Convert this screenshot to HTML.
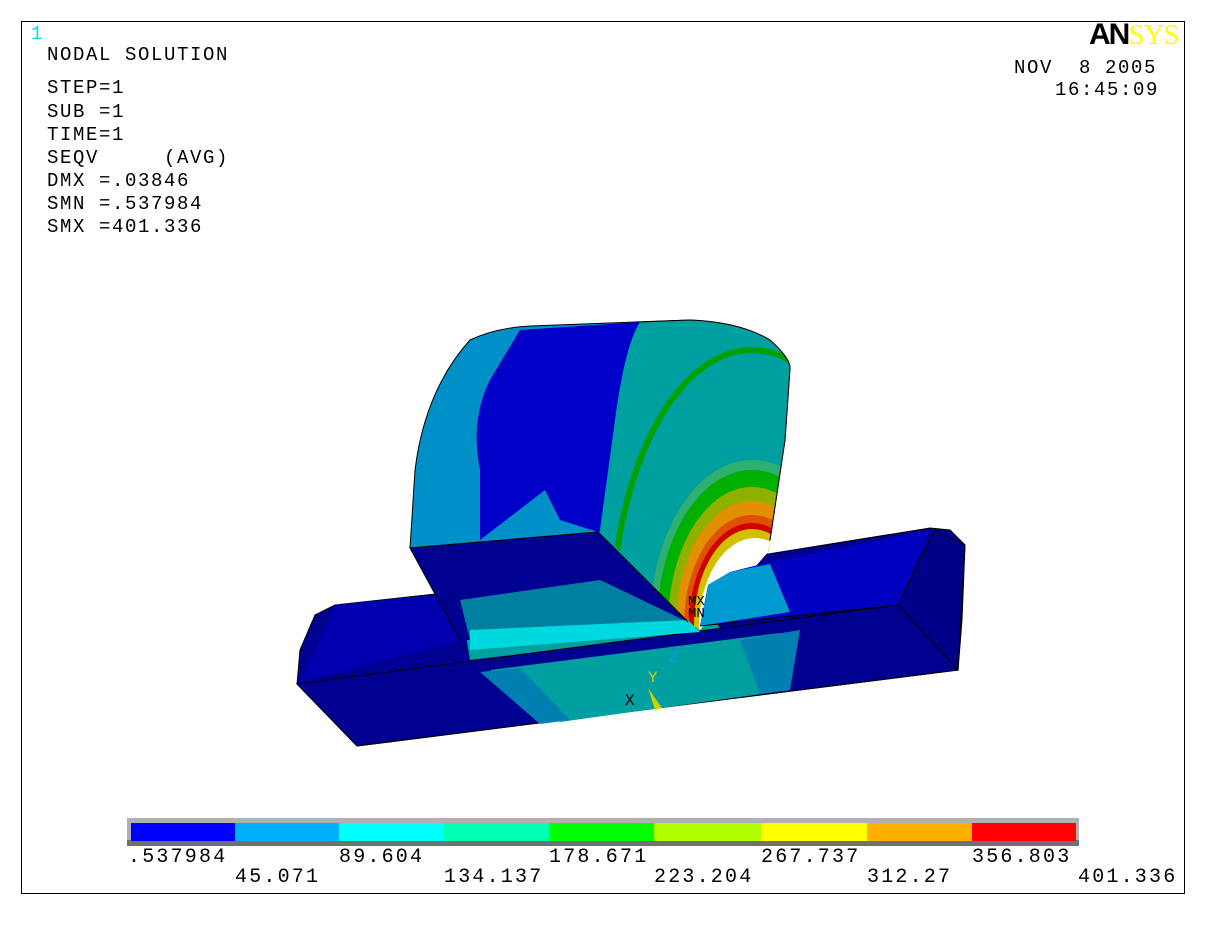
<!DOCTYPE html>
<html><head><meta charset="utf-8"><style>
body{margin:0;background:#fff;width:1221px;height:950px;overflow:hidden;position:relative;font-family:"Liberation Mono",monospace;}
.frame{position:absolute;left:21px;top:21px;width:1162px;height:871px;border:1px solid #000;}
.t{position:absolute;font-size:19px;letter-spacing:1.6px;color:#000;white-space:pre;line-height:20px;}
.l{position:absolute;font-size:20px;letter-spacing:2.2px;white-space:pre;line-height:20px;color:#000;}
</style></head><body>
<div class="frame"></div>
<div class="t" style="left:31px;top:24px;color:#00e0e0;">1</div>
<div class="t" style="left:47px;top:45px;">NODAL SOLUTION</div>
<div class="t" style="left:47px;top:78px;">STEP=1</div>
<div class="t" style="left:47px;top:102px;">SUB =1</div>
<div class="t" style="left:47px;top:125px;">TIME=1</div>
<div class="t" style="left:47px;top:148px;">SEQV     (AVG)</div>
<div class="t" style="left:47px;top:171px;">DMX =.03846</div>
<div class="t" style="left:47px;top:194px;">SMN =.537984</div>
<div class="t" style="left:47px;top:217px;">SMX =401.336</div>
<div class="t" style="left:1014px;top:58px;">NOV  8 2005</div>
<div class="t" style="left:1055px;top:80px;">16:45:09</div>
<div style="position:absolute;left:1089px;top:20px;font-family:'Liberation Sans',sans-serif;font-weight:bold;font-size:30px;line-height:30px;letter-spacing:-2px;">AN<span style="font-family:'Liberation Serif',serif;font-weight:normal;color:#ffff00;letter-spacing:-1px;font-size:29px;">SYS</span></div>

<svg style="position:absolute;left:0;top:0" width="1221" height="950">
<defs>
<clipPath id="rf"><path d="M640,322 L690,320 Q740,322 770,340 Q790,358 790,368 L785,440 L768,552 L700,630 L688,622 L600,530 L615,420 Q625,345 640,322 Z"/></clipPath>
</defs>
<!-- bar -->
<polygon points="297,684 300,650 315,615 335,605 700,565 930,528 950,530 965,545 962,620 958,670 357,746" fill="#000090" stroke="#000" stroke-width="1"/>
<polygon points="335,605 460,592 465,640 300,682" fill="#0000b0"/>
<polygon points="460,600 700,575 720,630 470,660" fill="#00a0a0"/>
<polygon points="297,684 898,605 958,670 357,746" fill="#000090" stroke="#000" stroke-width="1"/>
<polygon points="490,670 780,633 790,690 560,722" fill="#00a0a0"/>
<polygon points="480,672 520,668 570,720 540,724" fill="#0080b0"/>
<polygon points="740,640 800,630 790,690 760,694" fill="#0080b0"/>
<polygon points="898,605 935,530 965,545 958,670" fill="#000088" stroke="#000" stroke-width="1"/>
<!-- wheel -->
<path d="M410,548 L415,470 Q425,390 470,340 Q495,328 530,326 L690,320 Q740,322 770,340 Q790,358 790,368 L785,440 L770,540 L700,550 L598,532 Z" fill="#0090c8" stroke="#000" stroke-width="1"/>
<path d="M520,330 L640,322 L620,520 L598,532 L560,520 L545,490 L480,540 L480,470 Q470,420 490,380 Z" fill="#0000c8"/>
<polygon points="598,532 640,530 700,600 688,622" fill="#00a0a0"/>
<g clip-path="url(#rf)">
<rect x="590" y="300" width="210" height="340" fill="#00a0a0"/>
<ellipse cx="752" cy="625" rx="140" ry="275" fill="none" stroke="#00a000" stroke-width="6"/>
<ellipse cx="752" cy="625" rx="102" ry="165" fill="#30b070"/>
<ellipse cx="752" cy="625" rx="95" ry="155" fill="#00b000"/>
<ellipse cx="752" cy="625" rx="84" ry="138" fill="#90b000"/>
<ellipse cx="752" cy="625" rx="76" ry="124" fill="#e09000"/>
<ellipse cx="752" cy="625" rx="68" ry="110" fill="#e05000"/>
<ellipse cx="752" cy="625" rx="63" ry="102" fill="#d00000"/>
<ellipse cx="752" cy="625" rx="58" ry="96" fill="#d0c000"/>
<ellipse cx="755" cy="628" rx="56" ry="90" fill="#fff"/>
</g>
<path d="M640,322 L690,320 Q740,322 770,340 Q790,358 790,368 L785,440 L770,540" fill="none" stroke="#000"/>
<!-- wheel bottom box -->
<polygon points="410,548 598,532 688,622 460,640" fill="#000090" stroke="#000" stroke-width="1"/>
<polygon points="460,600 600,580 688,622 470,640" fill="#0080a0"/>
<polygon points="470,630 688,620 700,632 470,650" fill="#00d8e0"/>
<line x1="598" y1="532" x2="688" y2="622" stroke="#000"/>
<!-- bar right part over hole bottom -->
<polygon points="700,626 708,585 730,572 770,562 930,530 898,605" fill="#0000c0"/>
<polygon points="700,626 708,585 730,572 770,564 790,612" fill="#0099d0"/>
<line x1="700" y1="626" x2="898" y2="605" stroke="#000"/>
<!-- triad -->
<polygon points="648,688 662,708 655,710" fill="#d0d000"/>
<text x="648" y="682" font-family="Liberation Mono" font-size="16" fill="#d0d000">Y</text>
<text x="668" y="662" font-family="Liberation Mono" font-size="16" fill="#00a0e0">Z</text>
<text x="625" y="705" font-family="Liberation Mono" font-size="16" fill="#000">X</text>
<text x="688" y="605" font-family="Liberation Mono" font-size="14" fill="#000">MX</text>
<text x="688" y="617" font-family="Liberation Mono" font-size="14" fill="#000">MN</text>
<!-- colorbar -->
<rect x="127" y="818" width="952" height="28" fill="#b0b0b0"/>
<rect x="127" y="840" width="952" height="6" fill="#707070"/>
<g>
<rect x="131" y="823" width="104" height="18" fill="#0000ff"/>
<rect x="235" y="823" width="104" height="18" fill="#00b0ff"/>
<rect x="339" y="823" width="105" height="18" fill="#00ffff"/>
<rect x="444" y="823" width="105" height="18" fill="#00ffb0"/>
<rect x="549" y="823" width="105" height="18" fill="#00ff00"/>
<rect x="654" y="823" width="107" height="18" fill="#b0ff00"/>
<rect x="761" y="823" width="106" height="18" fill="#ffff00"/>
<rect x="867" y="823" width="105" height="18" fill="#ffb000"/>
<rect x="972" y="823" width="104" height="18" fill="#ff0000"/>
</g>
</svg>
<div class="l" style="left:128px;top:848px;">.537984</div>
<div class="l" style="left:339px;top:848px;">89.604</div>
<div class="l" style="left:549px;top:848px;">178.671</div>
<div class="l" style="left:761px;top:848px;">267.737</div>
<div class="l" style="left:972px;top:848px;">356.803</div>
<div class="l" style="left:235px;top:868px;">45.071</div>
<div class="l" style="left:444px;top:868px;">134.137</div>
<div class="l" style="left:654px;top:868px;">223.204</div>
<div class="l" style="left:867px;top:868px;">312.27</div>
<div class="l" style="left:1078px;top:868px;">401.336</div>
</body></html>
